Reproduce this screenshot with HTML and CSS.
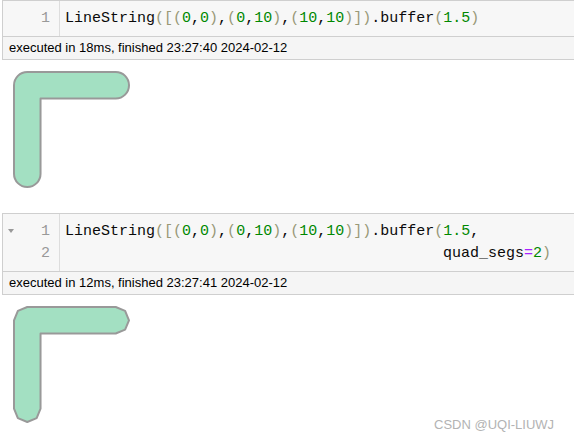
FILE: index.html
```html
<!DOCTYPE html>
<html>
<head>
<meta charset="utf-8">
<link rel="stylesheet" href="styles.css">
</head>
<body>
<div class="page">
  <div class="cell first">
    <div class="input">
      <div class="gutter">
        <div class="nums"><div>1</div></div>
      </div>
      <div class="code">
        <div class="line"><span class="v">LineString</span><span class="b">([(</span><span class="n">0</span>,<span class="n">0</span><span class="b">)</span>,<span class="b">(</span><span class="n">0</span>,<span class="n">10</span><span class="b">)</span>,<span class="b">(</span><span class="n">10</span>,<span class="n">10</span><span class="b">)])</span>.<span class="v">buffer</span><span class="b">(</span><span class="n">1.5</span><span class="b">)</span></div>
      </div>
    </div>
    <div class="timing">executed in 18ms, finished 23:27:40 2024-02-12</div>
  </div>
  <div class="output">
    <svg class="shape" width="119" height="119" viewBox="-1.726 -1.726 13.452 13.452">
      <g transform="matrix(1,0,0,-1,0,10)">
        <path d="M1.5,0 A1.5,1.5 0 0 0 -1.5,0 L-1.5,10 A1.5,1.5 0 0 0 0,11.5 L10,11.5 A1.5,1.5 0 0 0 10,8.5 L1.5,8.5 Z" />
      </g>
    </svg>
  </div>
  <div class="cell">
    <div class="input">
      <div class="gutter">
        <span class="collapse"></span>
        <div class="nums"><div>1</div><div>2</div></div>
      </div>
      <div class="code">
        <div class="line"><span class="v">LineString</span><span class="b">([(</span><span class="n">0</span>,<span class="n">0</span><span class="b">)</span>,<span class="b">(</span><span class="n">0</span>,<span class="n">10</span><span class="b">)</span>,<span class="b">(</span><span class="n">10</span>,<span class="n">10</span><span class="b">)])</span>.<span class="v">buffer</span><span class="b">(</span><span class="n">1.5</span>,</div>
        <div class="line">                                          <span class="v">quad_segs</span><span class="o">=</span><span class="n">2</span><span class="b">)</span></div>
      </div>
    </div>
    <div class="timing">executed in 12ms, finished 23:27:41 2024-02-12</div>
  </div>
  <div class="output">
    <svg class="shape" width="119" height="119" viewBox="-1.726 -1.726 13.452 13.452">
      <g transform="matrix(1,0,0,-1,0,10)">
        <path d="M1.5,0 L1.0607,-1.0607 L0,-1.5 L-1.0607,-1.0607 L-1.5,0 L-1.5,10 L-1.0607,11.0607 L0,11.5 L10,11.5 L11.0607,11.0607 L11.5,10 L11.0607,8.9393 L10,8.5 L1.5,8.5 Z" />
      </g>
    </svg>
  </div>
</div>
<div class="watermark">CSDN @UQI-LIUWJ</div>
</body>
</html>
```

FILE: styles.css
```css
html, body {
  margin: 0;
  padding: 0;
  background: #ffffff;
  overflow: hidden;
}

.page {
  width: 600px;
  padding-left: 2px;
  position: relative;
}

.cell {
  border: 1px solid #cfcfcf;
  background: #f7f7f7;
}

.input {
  display: flex;
  border-bottom: 1px solid #cfcfcf;
}

.gutter {
  width: 57px;
  flex: none;
  border-right: 1px solid #dddddd;
  position: relative;
  padding: 7px 0 6px;
  box-sizing: border-box;
}

.nums {
  font-family: "Liberation Mono", monospace;
  font-size: 15px;
  line-height: 22px;
  color: #999999;
  text-align: right;
  padding-right: 9px;
}

.collapse {
  position: absolute;
  left: 5px;
  top: 15px;
  width: 0;
  height: 0;
  border-left: 3px solid transparent;
  border-right: 3px solid transparent;
  border-top: 4px solid #999999;
}

.code {
  padding: 7px 0 6px 5px;
  font-family: "Liberation Mono", monospace;
  font-size: 15px;
  line-height: 22px;
  color: #0a0a0a;
}

.line {
  white-space: pre;
}

.code .b { color: #999977; }
.code .n { color: #008800; }
.code .o { color: #aa22ff; }
.code .v { color: #0a0a0a; }

.timing {
  height: 22px;
  line-height: 22px;
  padding-left: 6px;
  font-family: "Liberation Sans", Arial, sans-serif;
  font-size: 13px;
  color: #000000;
  background: #f5f5f5;
}

.output {
  padding: 10px 0 24px 10px;
}

.shape {
  display: block;
}

.shape path {
  fill: #a3e0c2;
  stroke: #999999;
  stroke-width: 2px;
  vector-effect: non-scaling-stroke;
  stroke-linejoin: round;
}

.watermark {
  position: absolute;
  left: 434px;
  top: 417px;
  font-family: "Liberation Sans", Arial, sans-serif;
  font-size: 13px;
  color: #b3b3b3;
}
```
